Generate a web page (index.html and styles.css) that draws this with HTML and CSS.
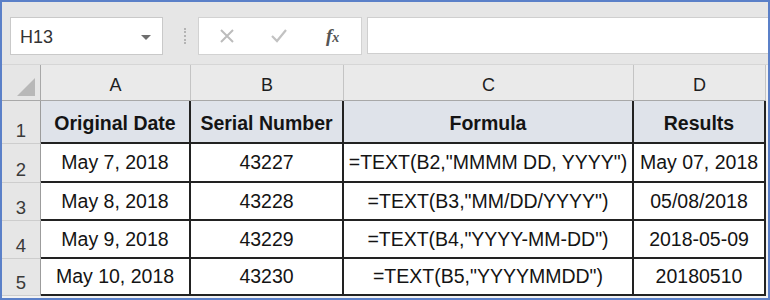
FILE: index.html
```html
<!DOCTYPE html>
<html>
<head>
	<title>TEXT function date formats</title>
	<meta name="viewport" content="width=device-width, initial-scale=1">

	<link rel="stylesheet" href="styles.css">
</head>
<body>
	<div class="frame">

		<div class="toolbar">
			<div class="name-box">
				<span>H13</span>
				<span class="drop"></span>
			</div>
			<span class="sep"></span>
			<div class="fx-buttons">
				<svg class="btn-cancel" width="16" height="16" viewBox="0 0 16 16">
					<path d="M2 2 L14 14 M14 2 L2 14" stroke="#bcbcbc" stroke-width="2" fill="none"/>
				</svg>
				<svg class="btn-enter" width="18" height="16" viewBox="0 0 18 16">
					<path d="M2 8 L7 13 L16 2" stroke="#c2c2c2" stroke-width="2.2" fill="none"/>
				</svg>
				<span class="fx"><i>f</i><i class="x">x</i></span>
			</div>
			<div class="formula-input"></div>
		</div> <!-- .toolbar -->

		<div class="sheet">
			<!-- column headings -->
			<div class="corner">
				<svg width="18" height="18" viewBox="0 0 18 18">
					<polygon points="18,0 18,18 0,18" fill="#b8b8b8"/>
				</svg>
			</div>
			<div class="col-head">A</div>
			<div class="col-head">B</div>
			<div class="col-head">C</div>
			<div class="col-head">D</div>

			<div class="row-num">1</div>
			<div class="cell head">Original Date</div>
			<div class="cell head">Serial Number</div>
			<div class="cell head">Formula</div>
			<div class="cell head">Results</div>

			<div class="row-num">2</div>
			<div class="cell">May 7, 2018</div>
			<div class="cell">43227</div>
			<div class="cell">=TEXT(B2,"MMMM DD, YYYY")</div>
			<div class="cell">May 07, 2018</div>

			<div class="row-num">3</div>
			<div class="cell">May 8, 2018</div>
			<div class="cell">43228</div>
			<div class="cell">=TEXT(B3,"MM/DD/YYYY")</div>
			<div class="cell">05/08/2018</div>

			<div class="row-num">4</div>
			<div class="cell">May 9, 2018</div>
			<div class="cell">43229</div>
			<div class="cell">=TEXT(B4,"YYYY-MM-DD")</div>
			<div class="cell">2018-05-09</div>

			<div class="row-num">5</div>
			<div class="cell">May 10, 2018</div>
			<div class="cell">43230</div>
			<div class="cell">=TEXT(B5,"YYYYMMDD")</div>
			<div class="cell">20180510</div>
		</div> <!-- .sheet -->

	</div> <!-- .frame -->
</body>
</html>
```

FILE: styles.css
```css
body {
	margin: 0;
	font-family: "Liberation Sans", Arial, sans-serif;
}

.frame {
	width: 770px;
	height: 300px;
	box-sizing: border-box;
	border: 2px solid #5b80c8;
	background-color: #f2f2f2;
	overflow: hidden;
}

/* formula bar */
.toolbar {
	display: flex;
	height: 63px;
	box-sizing: border-box;
	padding: 15px 0 0 8px;
	background-color: #e6e6e6;
	border-bottom: 1px solid #d6d6d6;
}
.name-box {
	width: 153px;
	height: 38px;
	box-sizing: border-box;
	border: 1px solid #c9c9c9;
	background-color: #fff;
	display: flex;
	align-items: center;
	justify-content: space-between;
	padding: 2px 11px 0 9px;
	font-size: 18px;
	color: #333;
}
.drop {
	width: 0;
	height: 0;
	border-left: 5px solid transparent;
	border-right: 5px solid transparent;
	border-top: 5px solid #6e6e6e;
}
.sep {
	width: 0;
	height: 16px;
	margin: 11px 0 0 21px;
	border-left: 2px dotted #b4b4b4;
}
.fx-buttons {
	width: 164px;
	height: 38px;
	box-sizing: border-box;
	margin-left: 12px;
	border: 1px solid #d2d2d2;
	background-color: #fff;
	display: flex;
	align-items: center;
	padding: 0 0 0 20px;
}
.btn-cancel {
	margin-right: 35px;
}
.btn-enter {
	margin-right: 38px;
}
.fx {
	font-family: "Liberation Serif", serif;
	font-weight: bold;
	font-size: 19px;
	color: #555;
}
.fx .x {
	font-size: 14px;
}
.formula-input {
	flex: 1;
	height: 37px;
	box-sizing: border-box;
	margin-left: 5px;
	border: 1px solid #cfcfcf;
	border-right: none;
	background-color: #fff;
}

/* worksheet grid */
.sheet {
	display: grid;
	grid-template-columns: 39px 150px 153px 290px 132px;
	grid-template-rows: 36px 43px 39px 38px 38px 37px;
}
.corner {
	background-color: #e6e6e6;
	border-right: 1px solid #a8a8a8;
	border-bottom: 1px solid #a8a8a8;
	display: flex;
	align-items: flex-end;
	justify-content: flex-end;
	padding: 0 5px 4px 0;
}
.col-head {
	background-color: #eaeaea;
	border-right: 1px solid #c4c4c4;
	border-bottom: 1px solid #a8a8a8;
	display: flex;
	justify-content: center;
	align-items: center;
	padding-top: 5px;
	font-size: 18px;
	color: #1e1e1e;
}
.row-num {
	background-color: #e6e6e6;
	border-right: 1px solid #9c9c9c;
	border-bottom: 1px solid #cdcdcd;
	display: flex;
	justify-content: center;
	align-items: flex-end;
	padding-bottom: 1px;
	font-size: 18.5px;
	color: #3a3a3a;
}
.cell {
	background-color: #fff;
	border-right: 2px solid #222;
	border-bottom: 2px solid #222;
	display: flex;
	justify-content: center;
	align-items: center;
	font-size: 19.5px;
	color: #141414;
	white-space: nowrap;
}
.head {
	background-color: #dfe3ea;
	font-weight: bold;
	padding-top: 3px;
}
.row-num, .col-head, .corner, .cell {
	box-sizing: border-box;
}
```
